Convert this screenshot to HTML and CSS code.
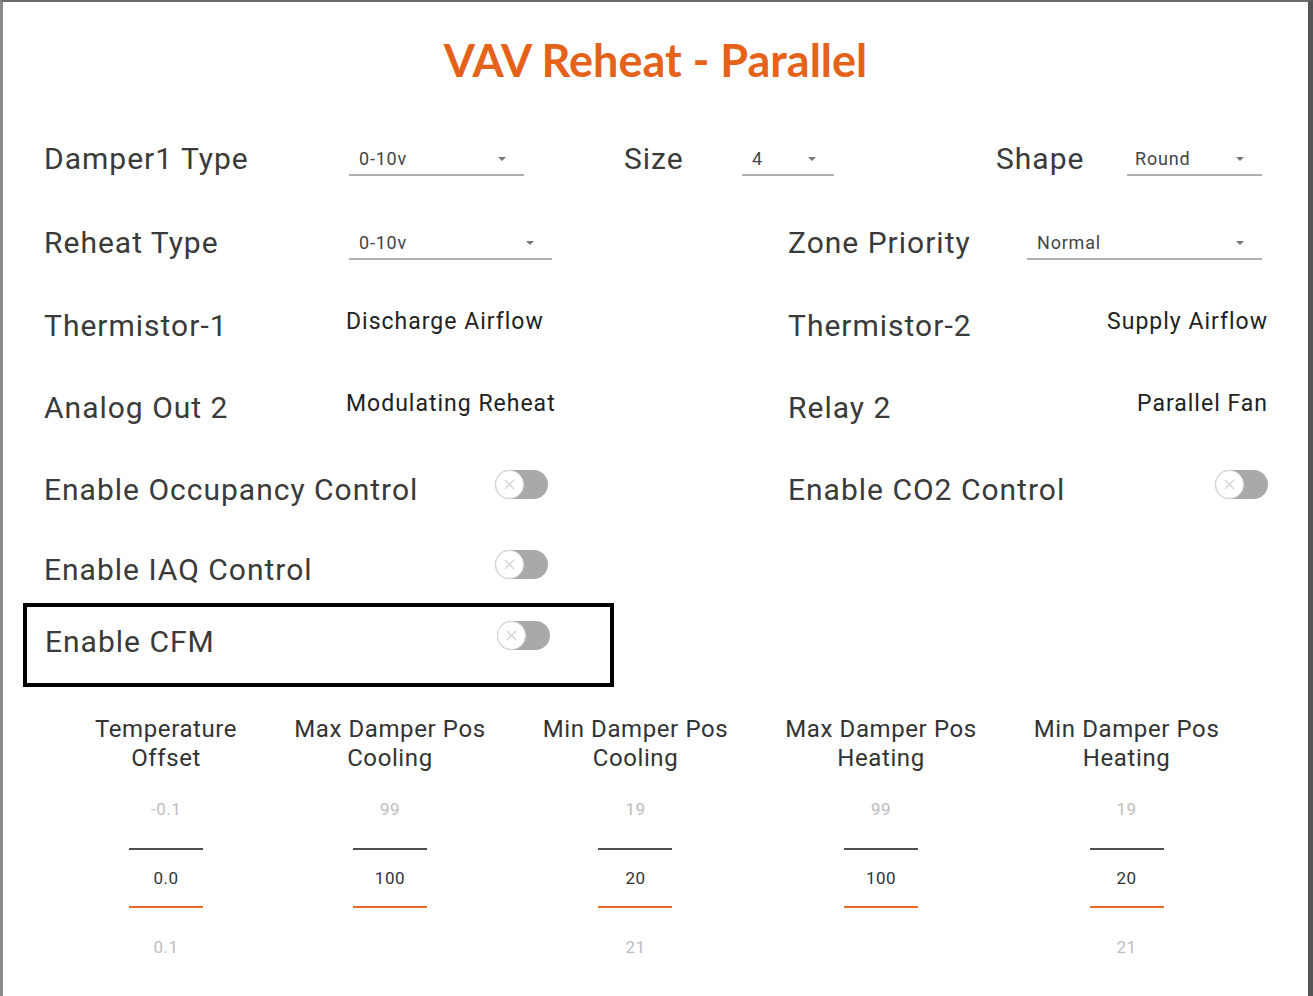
FILE: index.html
```html
<!DOCTYPE html>
<html>
<head>
<meta charset="utf-8">
<link rel="stylesheet" href="styles.css">
</head>
<body>
<div class="frame">
  <h1 class="title">VAV Reheat - Parallel</h1>

  <div class="row r1">
    <span class="label lw304">Damper1 Type</span>
    <div class="select sw175"><span class="sel-text">0-10v</span><span class="caret"></span></div>
    <span class="label size-label">Size</span>
    <div class="select sw92"><span class="sel-text">4</span><span class="caret"></span></div>
    <span class="label shape-label">Shape</span>
    <div class="select sw135 tight"><span class="sel-text">Round</span><span class="caret"></span></div>
  </div>

  <div class="row r2">
    <div class="half">
      <span class="label lw304">Reheat Type</span>
      <div class="select sw203"><span class="sel-text">0-10v</span><span class="caret"></span></div>
    </div>
    <div class="half right">
      <span class="label lw239">Zone Priority</span>
      <div class="select sw235"><span class="sel-text">Normal</span><span class="caret"></span></div>
    </div>
  </div>

  <div class="row r3">
    <div class="half">
      <span class="label lw301">Thermistor-1</span>
      <span class="value">Discharge Airflow</span>
    </div>
    <div class="half right">
      <span class="label">Thermistor-2</span>
      <span class="value push">Supply Airflow</span>
    </div>
  </div>

  <div class="row r4">
    <div class="half">
      <span class="label lw301">Analog Out 2</span>
      <span class="value">Modulating Reheat</span>
    </div>
    <div class="half right">
      <span class="label">Relay 2</span>
      <span class="value push">Parallel Fan</span>
    </div>
  </div>

  <div class="row r5">
    <div class="half">
      <span class="label lw450">Enable Occupancy Control</span>
      <span class="toggle"><span class="knob"></span></span>
    </div>
    <div class="half right">
      <span class="label">Enable CO2 Control</span>
      <span class="toggle push"><span class="knob"></span></span>
    </div>
  </div>

  <div class="row r6">
    <div class="half">
      <span class="label lw450">Enable IAQ Control</span>
      <span class="toggle"><span class="knob"></span></span>
    </div>
  </div>

  <div class="cfm-box">
    <span class="label lw452">Enable CFM</span>
    <span class="toggle"><span class="knob"></span></span>
  </div>

  <div class="pickers">
    <div class="picker">
      <div class="p-head">Temperature<br>Offset</div>
      <div class="p-val faded first">-0.1</div>
      <div class="p-line dark"></div>
      <div class="p-val sel">0.0</div>
      <div class="p-line orange"></div>
      <div class="p-val faded last">0.1</div>
    </div>
    <div class="picker">
      <div class="p-head">Max Damper Pos<br>Cooling</div>
      <div class="p-val faded first">99</div>
      <div class="p-line dark"></div>
      <div class="p-val sel">100</div>
      <div class="p-line orange"></div>
      <div class="p-val faded last"></div>
    </div>
    <div class="picker">
      <div class="p-head">Min Damper Pos<br>Cooling</div>
      <div class="p-val faded first">19</div>
      <div class="p-line dark"></div>
      <div class="p-val sel">20</div>
      <div class="p-line orange"></div>
      <div class="p-val faded last">21</div>
    </div>
    <div class="picker">
      <div class="p-head">Max Damper Pos<br>Heating</div>
      <div class="p-val faded first">99</div>
      <div class="p-line dark"></div>
      <div class="p-val sel">100</div>
      <div class="p-line orange"></div>
      <div class="p-val faded last"></div>
    </div>
    <div class="picker">
      <div class="p-head">Min Damper Pos<br>Heating</div>
      <div class="p-val faded first">19</div>
      <div class="p-line dark"></div>
      <div class="p-val sel">20</div>
      <div class="p-line orange"></div>
      <div class="p-val faded last">21</div>
    </div>
  </div>
</div>
</body>
</html>
```

FILE: styles.css
```css
html, body {
  margin: 0;
  padding: 0;
  background: #ffffff;
}

.frame {
  box-sizing: border-box;
  width: 1313px;
  height: 996px;
  overflow: hidden;
  border-top: 2px solid #6a6a6a;
  border-left: 3px solid #8a8a8a;
  border-right: 5px solid #555555;
  font-family: Roboto, "Liberation Sans", sans-serif;
  color: #3a3a3a;
  padding-left: 41px;
}

.title {
  margin: -2px 0 0 -41px;
  height: 120px;
  line-height: 120px;
  text-align: center;
  font-family: Lato, "Liberation Sans", sans-serif;
  font-weight: 700;
  font-size: 45px;
  color: #e5621a;
}

.row {
  display: flex;
  align-items: center;
}

.r1 { height: 84px; margin-top: -4px; }
.r2 { height: 84px; }
.r3 { height: 82px; }
.r4 { height: 82px; }
.r5 { height: 82px; }
.r6 { height: 73px; box-sizing: border-box; padding-top: 6px; }

.half {
  display: flex;
  align-items: center;
  width: 744px;
}

.half.right {
  width: 479px;
}

.label {
  font-size: 30px;
  letter-spacing: 1px;
  white-space: nowrap;
  flex: none;
}

.lw304 { width: 305px; }
.lw301 { width: 302px; }
.lw239 { width: 239px; }
.lw450 { width: 451px; }
.lw452 { width: 452px; }

.size-label { margin-left: 100px; width: 118px; }
.shape-label { margin-left: 162px; width: 131px; }

.select {
  position: relative;
  box-sizing: border-box;
  height: 30px;
  margin-top: 6px;
  border-bottom: 2px solid #b0b0b0;
  padding-left: 10px;
  font-size: 18px;
  letter-spacing: 0.8px;
  line-height: 26px;
  color: #444;
  flex: none;
}

.select.tight { padding-left: 8px; }

.sw175 { width: 175px; }
.sw92 { width: 92px; }
.sw135 { width: 135px; }
.sw203 { width: 203px; }
.sw235 { width: 235px; }

.caret {
  position: absolute;
  right: 18px;
  top: 11px;
  width: 0;
  height: 0;
  border-left: 4px solid transparent;
  border-right: 4px solid transparent;
  border-top: 4px solid #777;
}

.value {
  font-size: 23px;
  letter-spacing: 1px;
  color: #222;
  margin-top: -8px;
  white-space: nowrap;
}

.push {
  margin-left: auto;
}

.half.right .value.push {
  margin-right: -1px;
}

.toggle {
  position: relative;
  display: inline-block;
  width: 53px;
  height: 29px;
  border-radius: 15px;
  background: #a9a9a9;
  margin-top: -10px;
  flex: none;
}

.half.right .toggle {
  margin-right: -1px;
}

.knob {
  position: absolute;
  left: 0;
  top: 0;
  box-sizing: border-box;
  width: 29px;
  height: 29px;
  border-radius: 50%;
  background: #ffffff;
  border: 1px solid #dcdcdc;
}

.knob::before,
.knob::after {
  content: "";
  position: absolute;
  left: 7px;
  top: 13px;
  width: 13px;
  height: 1px;
  background: #c8c8c8;
}

.knob::before { transform: rotate(45deg); }
.knob::after { transform: rotate(-45deg); }

.cfm-box {
  display: flex;
  align-items: center;
  box-sizing: border-box;
  width: 591px;
  height: 84px;
  margin-left: -21px;
  padding-left: 18px;
  padding-bottom: 7px;
  border: 4px solid #000;
}

.cfm-box .toggle {
  margin-top: -12px;
}

.pickers {
  display: flex;
  gap: 57px;
  padding-left: 51px;
  margin-top: 28px;
}

.picker {
  display: flex;
  flex-direction: column;
  align-items: center;
}

.p-head {
  font-size: 24px;
  letter-spacing: 0.6px;
  line-height: 29px;
  text-align: center;
  color: #333;
  white-space: nowrap;
}

.p-val {
  height: 20px;
  line-height: 20px;
  font-size: 17px;
  letter-spacing: 0.5px;
  text-align: center;
}

.p-val.first { margin-top: 26px; }
.p-val.sel { margin-top: 18px; color: #333; }
.p-val.last { margin-top: 29px; }
.faded { color: #bdbdbd; }

.p-line {
  width: 74px;
  height: 2px;
}

.p-line.dark { margin-top: 29px; background: #505050; }
.p-line.orange { margin-top: 18px; background: #ec6a25; }
```
